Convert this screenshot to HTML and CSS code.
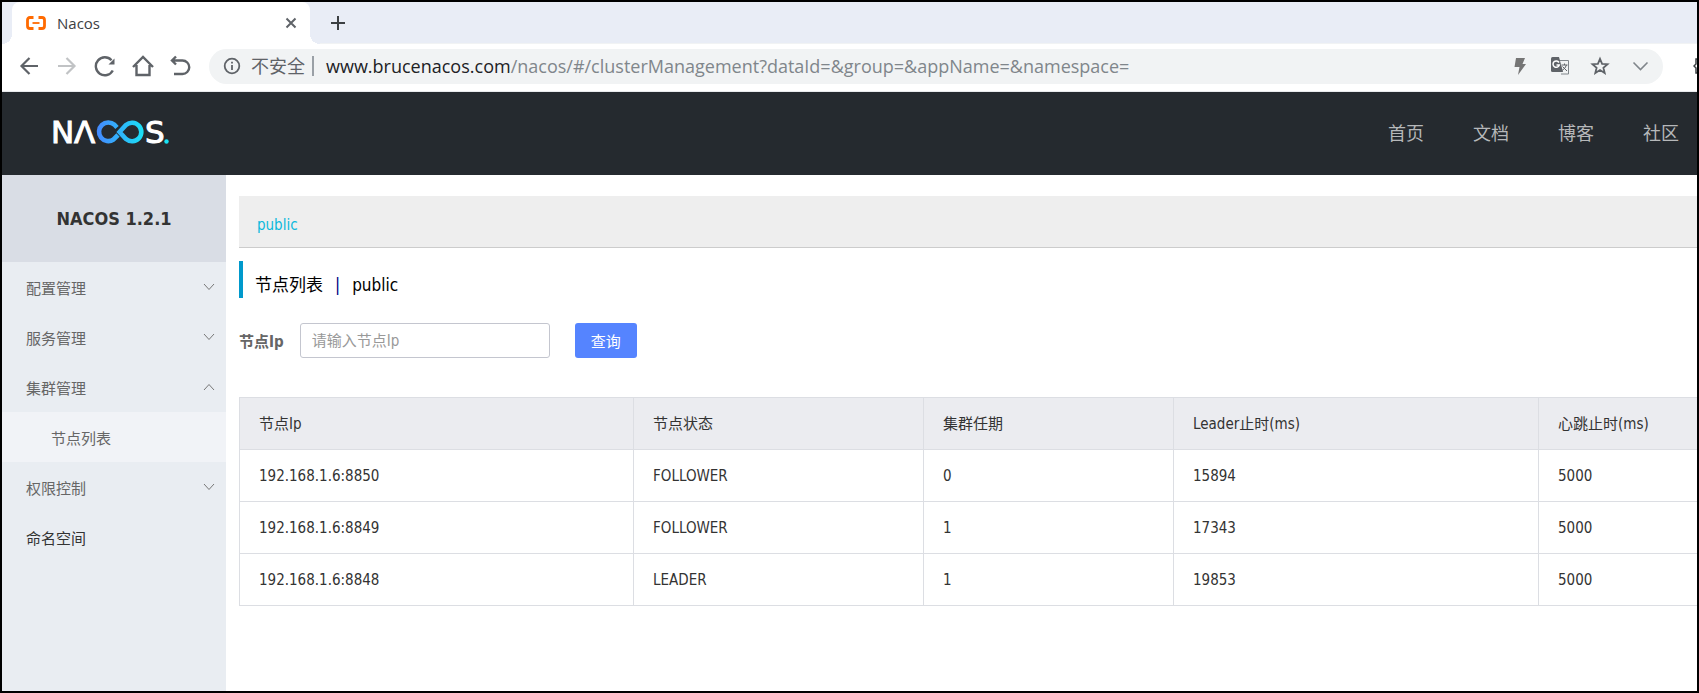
FILE: index.html
```html
<!DOCTYPE html>
<html lang="zh-CN">
<head>
    <meta charset="UTF-8">
    <meta name="viewport" content="width=device-width, initial-scale=1.0">
    <title>Nacos</title>
    <link rel="stylesheet" href="styles.css">
</head>
<body>
<div class="window">

    <!-- 标签栏 -->
    <div class="tab-strip">
        <div class="tab">
            <svg class="favicon" width="20" height="14" viewBox="0 0 20 14" fill="none" stroke="#ff6a00">
                <path d="M7.500 1.500H4Q1.500 1.500 1.500 4V10Q1.500 12.500 4 12.500H7.500M12.500 1.500H16Q18.500 1.500 18.500 4V10Q18.500 12.500 16 12.500H12.500" stroke-width="2.800"/>
                <path d="M6.500 7H13.500" stroke-width="1.800"/>
            </svg>
            <span class="tab-title">Nacos</span>
            <button class="icon-btn" aria-label="关闭">
                <svg width="12" height="12" viewBox="0 0 12 12" stroke="#5f6368" stroke-width="2"><path d="M1.500 1.500L10.500 10.500M10.500 1.500L1.500 10.500"/></svg>
            </button>
        </div>
        <button class="icon-btn" aria-label="新标签页">
            <svg width="16" height="16" viewBox="0 0 16 16" stroke="#3c4043" stroke-width="2"><path d="M8 1V15M1 8H15"/></svg>
        </button>
    </div>

    <!-- 地址栏 -->
    <div class="toolbar">
        <button class="icon-btn" aria-label="后退">
            <svg width="22" height="22" viewBox="0 0 22 22" fill="none" stroke="#5f6368" stroke-width="2.200"><path d="M20 11H4M11.500 3L3.500 11L11.500 19"/></svg>
        </button>
        <button class="icon-btn" aria-label="前进">
            <svg width="22" height="22" viewBox="0 0 22 22" fill="none" stroke="#c1c3c5" stroke-width="2.200"><path d="M2 11H18M10.500 3L18.500 11L10.500 19"/></svg>
        </button>
        <button class="icon-btn" aria-label="刷新">
            <svg width="22" height="22" viewBox="0 0 22 22" fill="none" stroke="#5f6368" stroke-width="2.400"><path d="M18.800 15.500A9 9 0 1 1 17.500 5.200"/><path d="M20.500 3.500V9.500H14.500Z" fill="#5f6368" stroke="none"/></svg>
        </button>
        <button class="icon-btn" aria-label="主页">
            <svg width="22" height="22" viewBox="0 0 22 22" fill="none" stroke="#5f6368" stroke-width="2.400"><path d="M1 12L11 2L21 12M4.500 10V20H17.500V10"/></svg>
        </button>
        <button class="icon-btn" aria-label="撤销">
            <svg width="22" height="22" viewBox="0 0 22 22" fill="none" stroke="#5f6368" stroke-width="2.400"><path d="M6 1.500L2 5.500L6 9.500M2 5.500H12.500A6.700 6.700 0 0 1 12.500 19H4"/></svg>
        </button>
        <div class="omnibox">
            <svg width="18" height="18" viewBox="0 0 18 18" fill="none" stroke="#5f6368" stroke-width="1.800"><circle cx="9" cy="9" r="7.300"/><path d="M9 8V13M9 4.800V6.600"/></svg>
            <span class="insecure">不安全</span>
            <span class="url"><b>www.brucenacos.com</b>/nacos/#/clusterManagement?dataId=&amp;group=&amp;appName=&amp;namespace=</span>
            <div class="omnibox-actions">
                <button class="icon-btn" aria-label="快捷">
                    <svg width="20" height="20" viewBox="0 0 20 20" fill="#757575"><path d="M6 2H15L12.500 8H16L8 19L9.500 11H4.500Z"/></svg>
                </button>
                <button class="icon-btn" aria-label="翻译">
                    <svg width="20" height="20" viewBox="0 0 20 20" fill="none">
                        <path d="M9 4.500H18.500V18H11" stroke="#80868b"/>
                        <path d="M11.500 9H17.500M14.500 7.500V9M16.500 9Q15.500 12.500 12 14.500M12.500 10.500L17 15" stroke="#5f6368"/>
                        <path d="M2.500 1H9L13 16H2.500Q1 16 1 14.500V2.500Q1 1 2.500 1Z" fill="#5f6368"/>
                        <path d="M9 6.500A3.200 3.200 0 1 0 9.300 9H6.500" stroke="#fff" stroke-width="1.500"/>
                    </svg>
                </button>
                <button class="icon-btn" aria-label="收藏">
                    <svg width="20" height="20" viewBox="0 0 20 20" fill="none" stroke="#5f6368" stroke-width="1.800"><path d="M10 2.800L12.100 7.800L17.500 8.200L13.400 11.700L14.700 17L10 14.100L5.300 17L6.600 11.700L2.500 8.200L7.900 7.800Z"/></svg>
                </button>
                <button class="icon-btn" aria-label="更多">
                    <svg width="20" height="20" viewBox="0 0 20 20" fill="none" stroke="#80868b" stroke-width="1.600"><path d="M3.500 6.500L10.500 13.500L17.500 6.500"/></svg>
                </button>
            </div>
        </div>
        <div class="extension">
            <svg width="20" height="20" viewBox="0 0 20 20" fill="none" stroke="#3c4043" stroke-width="1.500"><path d="M6 3H3V8L1 10L3 12V17H6"/></svg>
        </div>
    </div>

    <!-- 顶部导航 -->
    <header class="header">
        <a href="#" class="logo" aria-label="Nacos">
            <svg width="120" height="44" viewBox="0 0 120 44">
                <defs>
                    <linearGradient id="loop" gradientUnits="userSpaceOnUse" x1="44" y1="0" x2="93" y2="0">
                        <stop offset="0" stop-color="#4687ff"/>
                        <stop offset="1" stop-color="#19e3f5"/>
                    </linearGradient>
                </defs>
                <g class="logo-text">
                    <text x="-1" y="31">N</text>
                    <text x="22" y="31">Λ</text>
                    <text x="93" y="31">S</text>
                </g>
                <g fill="none" stroke="url(#loop)" stroke-width="4.600">
                    <path d="M65 15.500L62.500 12.800A9.300 9.300 0 1 0 61.500 27.500L66 23"/>
                    <path d="M67.500 20L74 12.900A9.300 9.300 0 1 1 74 27.100Z"/>
                </g>
                <circle cx="114.500" cy="29.500" r="2.200" fill="#19e3f5"/>
            </svg>
        </a>
        <nav class="header-nav">
            <a href="#">首页</a>
            <a href="#">文档</a>
            <a href="#">博客</a>
            <a href="#">社区</a>
        </nav>
    </header>

    <div class="layout">
        <!-- 左侧菜单 -->
        <aside class="sidebar">
            <h1 class="version">NACOS 1.2.1</h1>
            <nav class="menu">
                <a href="#" class="menu-item">配置管理
                    <svg width="12" height="8" viewBox="0 0 12 8"><path d="M1 1L6 6.500L11 1"/></svg>
                </a>
                <a href="#" class="menu-item">服务管理
                    <svg width="12" height="8" viewBox="0 0 12 8"><path d="M1 1L6 6.500L11 1"/></svg>
                </a>
                <a href="#" class="menu-item">集群管理
                    <svg width="12" height="8" viewBox="0 0 12 8"><path d="M1 7L6 1.500L11 7"/></svg>
                </a>
                <a href="#" class="menu-item sub">节点列表</a>
                <a href="#" class="menu-item">权限控制
                    <svg width="12" height="8" viewBox="0 0 12 8"><path d="M1 1L6 6.500L11 1"/></svg>
                </a>
                <a href="#" class="menu-item dark">命名空间</a>
            </nav>
        </aside>

        <!-- 节点列表 -->
        <main class="content">
            <div class="namespace-bar"><a href="#">public</a></div>
            <h2 class="page-title"><span>节点列表</span><span class="sep">|</span><span>public</span></h2>

            <form class="search">
                <label for="nodeIp">节点Ip</label>
                <input type="text" id="nodeIp" placeholder="请输入节点Ip">
                <button type="button">查询</button>
            </form>

            <table class="nodes">
                <colgroup>
                    <col class="col-ip">
                    <col class="col-state">
                    <col class="col-term">
                    <col class="col-leader">
                    <col>
                </colgroup>
                <thead>
                    <tr>
                        <th>节点Ip</th>
                        <th>节点状态</th>
                        <th>集群任期</th>
                        <th>Leader止时(ms)</th>
                        <th>心跳止时(ms)</th>
                    </tr>
                </thead>
                <tbody>
                    <tr>
                        <td>192.168.1.6:8850</td>
                        <td>FOLLOWER</td>
                        <td>0</td>
                        <td>15894</td>
                        <td>5000</td>
                    </tr>
                    <tr>
                        <td>192.168.1.6:8849</td>
                        <td>FOLLOWER</td>
                        <td>1</td>
                        <td>17343</td>
                        <td>5000</td>
                    </tr>
                    <tr>
                        <td>192.168.1.6:8848</td>
                        <td>LEADER</td>
                        <td>1</td>
                        <td>19853</td>
                        <td>5000</td>
                    </tr>
                </tbody>
            </table>
        </main>
    </div>
</div>
</body>
</html>
```
FILE: styles.css
```css
* {
    box-sizing: border-box;
}
body {
    margin: 0;
    font-family: "DejaVu Sans Condensed", "Noto Sans CJK SC", sans-serif;
    font-size: 15px;
    color: #333;
}
a {
    color: inherit;
    text-decoration: none;
}
svg {
    display: block;
    flex-shrink: 0;
}
.window {
    display: flex;
    flex-direction: column;
    min-height: 100vh;
    border: 2px solid #000;
    background: #fff;
}
.icon-btn {
    padding: 0;
    border: none;
    background: none;
    cursor: pointer;
}

/* 浏览器 */
.tab-strip,
.toolbar {
    font-family: "Open Sans", "Noto Sans CJK SC", sans-serif;
}
.tab-strip {
    display: flex;
    align-items: center;
    gap: 20px;
    height: 42px;
    padding-left: 10px;
    background: #e9edf6;
    border-bottom: 1px solid #f1f3f4;
}
.tab {
    position: relative;
    display: flex;
    align-items: center;
    gap: 11px;
    width: 298px;
    height: 42px;
    padding: 0 13px 0 14px;
    background: #fff;
    border-radius: 8px 8px 0 0;
}
.tab::before,
.tab::after {
    content: "";
    position: absolute;
    bottom: 0;
    width: 10px;
    height: 10px;
}
.tab::before {
    left: -10px;
    background: radial-gradient(circle at 0 0, #e9edf6 10px, #fff 10px);
}
.tab::after {
    right: -10px;
    background: radial-gradient(circle at 100% 0, #e9edf6 10px, #fff 10px);
}
.tab-title {
    flex: 1;
    line-height: 20px;
    color: #3c4043;
}
.toolbar {
    display: flex;
    align-items: center;
    gap: 16px;
    height: 48px;
    padding: 0 0 3px 16px;
    border-bottom: 1px solid #e8eaed;
}
.omnibox {
    display: flex;
    flex: 1;
    align-items: center;
    height: 35px;
    margin-left: 1px;
    padding: 0 13px 0 14px;
    border-radius: 18px;
    background: #f1f3f4;
    font-size: 18px;
    line-height: 20px;
    color: #80868b;
}
.insecure {
    margin: 0 12px 0 10px;
    padding-right: 7px;
    border-right: 2px solid #9aa0a6;
    color: #5f6368;
}
.url b {
    font-weight: normal;
    color: #202124;
}
.omnibox-actions {
    display: flex;
    gap: 20px;
    margin-left: auto;
}
.extension {
    width: 18px;
    padding-left: 14px;
    overflow: hidden;
}

/* 顶部导航 */
.header {
    display: flex;
    align-items: center;
    justify-content: space-between;
    height: 83px;
    padding: 0 18px 0 50px;
    background: #252a2f;
}
.logo-text {
    font-family: "DejaVu Sans", sans-serif;
    font-size: 31px;
    fill: #fff;
    stroke: #fff;
    stroke-width: 1px;
}
.header-nav {
    display: flex;
    gap: 49px;
    font-size: 18px;
    line-height: 24px;
    color: #b6b8ba;
}

/* 左侧菜单 */
.layout {
    display: flex;
    flex: 1;
}
.sidebar {
    flex: 0 0 224px;
    background: #e9edf2;
}
.version {
    height: 87px;
    margin: 0;
    font-size: 18px;
    line-height: 88px;
    text-align: center;
    background: #d9dde5;
}
.menu-item {
    display: flex;
    align-items: center;
    justify-content: space-between;
    height: 50px;
    padding: 3px 11px 0 24px;
    line-height: 20px;
    color: #666;
}
.menu-item svg {
    margin-bottom: 4px;
    fill: none;
    stroke: #777;
}
.menu-item.sub {
    padding-left: 49px;
    background: #f1f3f7;
}
.menu-item.dark {
    color: #333;
}

/* 内容 */
.content {
    flex: 1;
    min-width: 0;
    padding: 21px 0 0 13px;
}
.namespace-bar {
    height: 52px;
    padding: 5px 18px 0;
    line-height: 48px;
    background: #eee;
    border-bottom: 1px solid #ccc;
    color: #0cb9dc;
}
.page-title {
    display: flex;
    gap: 12px;
    height: 37px;
    margin: 13px 0 25px;
    padding: 5px 0 0 12px;
    border-left: 4px solid #09c;
    font-size: 17px;
    font-weight: normal;
    line-height: 38px;
    color: #000;
}
.page-title .sep {
    color: #000080;
}
.search {
    display: flex;
    align-items: center;
}
.search label {
    margin-right: 16px;
    font-weight: bold;
    color: #666;
}
.search input {
    width: 250px;
    height: 35px;
    margin-right: 25px;
    padding: 0 11px;
    border: 1px solid #c4c6cf;
    border-radius: 3px;
    font: inherit;
}
.search input::placeholder {
    color: #999;
}
.search button {
    height: 35px;
    padding: 0 16px;
    border: none;
    border-radius: 3px;
    background: #5584ff;
    font: inherit;
    color: #fff;
    cursor: pointer;
}
.nodes {
    width: 100%;
    margin-top: 39px;
    border-collapse: collapse;
    table-layout: fixed;
}
.nodes th,
.nodes td {
    height: 52px;
    padding: 0 19px;
    border: 1px solid #dcdee3;
    font-weight: normal;
    line-height: 20px;
    text-align: left;
}
.nodes th {
    background: #ebecf0;
}
.nodes th:last-child,
.nodes td:last-child {
    border-right: none;
}
.col-ip {
    width: 394px;
}
.col-state {
    width: 290px;
}
.col-term {
    width: 250px;
}
.col-leader {
    width: 365px;
}
```
